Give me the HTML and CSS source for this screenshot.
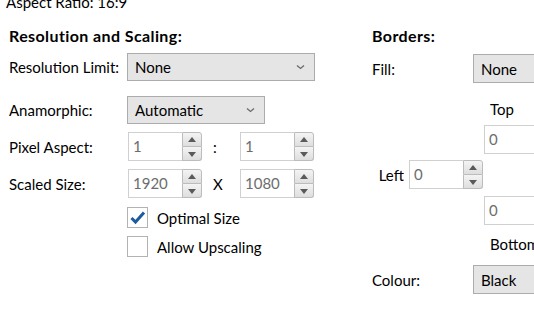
FILE: index.html
```html
<!DOCTYPE html>
<html>
<head>
  <meta charset="UTF-8">
  <link rel="stylesheet" href="styles.css">
</head>
<body>
  <div class="ar-caption">Aspect Ratio: 16:9</div>

  <div class="ar-panels">
    <!-- Resolution and Scaling -->
    <section class="ar-panel ar-scaling">
      <h3>Resolution and Scaling:</h3>

      <div class="ar-row ar-row-first">
        <label class="ar-label">Resolution Limit:</label>
        <div class="ar-dropdown ar-dropdown-wide">
          <span>None</span>
          <svg class="ar-chevron" width="9" height="6" viewBox="0 0 9 6"><path d="M1 1.5 L4.5 4.5 L8 1.5" fill="none" stroke="#6b6b6b" stroke-width="1.3"/></svg>
        </div>
      </div>

      <div class="ar-row ar-row-anam">
        <label class="ar-label">Anamorphic:</label>
        <div class="ar-dropdown ar-dropdown-mid">
          <span>Automatic</span>
          <svg class="ar-chevron" width="9" height="6" viewBox="0 0 9 6"><path d="M1 1.5 L4.5 4.5 L8 1.5" fill="none" stroke="#6b6b6b" stroke-width="1.3"/></svg>
        </div>
      </div>

      <div class="ar-row ar-row-spin">
        <label class="ar-label">Pixel Aspect:</label>
        <div class="ar-spinner">
          <div class="ar-spin-value">1</div>
          <div class="ar-spin-buttons"><span class="ar-up"></span><span class="ar-down"></span></div>
        </div>
        <span class="ar-sep">:</span>
        <div class="ar-spinner">
          <div class="ar-spin-value">1</div>
          <div class="ar-spin-buttons"><span class="ar-up"></span><span class="ar-down"></span></div>
        </div>
      </div>

      <div class="ar-row ar-row-spin">
        <label class="ar-label">Scaled Size:</label>
        <div class="ar-spinner">
          <div class="ar-spin-value">1920</div>
          <div class="ar-spin-buttons"><span class="ar-up"></span><span class="ar-down"></span></div>
        </div>
        <span class="ar-sep">X</span>
        <div class="ar-spinner">
          <div class="ar-spin-value">1080</div>
          <div class="ar-spin-buttons"><span class="ar-up"></span><span class="ar-down"></span></div>
        </div>
      </div>

      <div class="ar-check ar-check-first">
        <span class="ar-box">
          <svg width="21" height="21" viewBox="0 0 21 21"><path d="M4.5 11 L8.5 15 L17 5.5" fill="none" stroke="#1d5c9c" stroke-width="3"/></svg>
        </span>
        <span>Optimal Size</span>
      </div>
      <div class="ar-check">
        <span class="ar-box"></span>
        <span>Allow Upscaling</span>
      </div>
    </section>

    <!-- Borders -->
    <section class="ar-panel ar-borders">
      <h3>Borders:</h3>

      <div class="ar-row ar-row-fill">
        <label class="ar-label ar-label-short">Fill:</label>
        <div class="ar-dropdown ar-dropdown-wide">
          <span>None</span>
        </div>
      </div>

      <div class="ar-border-grid">
        <span class="ar-edge ar-edge-top">Top</span>
        <div class="ar-spinner ar-cell-top">
          <div class="ar-spin-value">0</div>
          <div class="ar-spin-buttons"><span class="ar-up"></span><span class="ar-down"></span></div>
        </div>
        <span class="ar-edge-left">Left</span>
        <div class="ar-spinner ar-cell-left">
          <div class="ar-spin-value">0</div>
          <div class="ar-spin-buttons"><span class="ar-up"></span><span class="ar-down"></span></div>
        </div>
        <div class="ar-spinner ar-cell-bottom">
          <div class="ar-spin-value">0</div>
          <div class="ar-spin-buttons"><span class="ar-up"></span><span class="ar-down"></span></div>
        </div>
        <span class="ar-edge ar-edge-bottom">Bottom</span>
      </div>

      <div class="ar-row ar-row-colour">
        <label class="ar-label ar-label-short">Colour:</label>
        <div class="ar-dropdown ar-dropdown-wide">
          <span>Black</span>
        </div>
      </div>
    </section>
  </div>
</body>
</html>
```

FILE: styles.css
```css
html, body {
  margin: 0;
  padding: 0;
}
body {
  width: 534px;
  height: 325px;
  overflow: hidden;
  background-color: #ffffff;
  color: #000000;
  font-family: Lato, "Liberation Sans", sans-serif;
  font-size: 15px;
  line-height: 20px;
}
.ar-caption {
  margin-top: -8px;
  padding-left: 6px;
}
.ar-panels {
  display: flex;
  width: 800px;
}
.ar-panel h3 {
  margin: 14px 0 0 0;
  font-size: 16px;
  letter-spacing: 0.4px;
  line-height: 20px;
  font-weight: bold;
}
.ar-scaling {
  width: 362px;
  padding-left: 9px;
}
.ar-borders {
  padding-left: 1px;
}
/* Строки формы */
.ar-row {
  display: flex;
  align-items: center;
}
.ar-row-first {
  margin-top: 7px;
}
.ar-row-anam {
  margin-top: 15px;
}
.ar-row-spin {
  margin-top: 8px;
}
.ar-label {
  width: 118px;
  flex-shrink: 0;
}
.ar-label-short {
  width: 101px;
}
/* Выпадающие списки */
.ar-dropdown {
  display: flex;
  align-items: center;
  justify-content: space-between;
  box-sizing: border-box;
  height: 28px;
  padding: 0 8px 0 7px;
  background-color: #e5e5e5;
  border: 1px solid #acacac;
}
.ar-dropdown-wide {
  width: 188px;
}
.ar-dropdown-mid {
  width: 138px;
}
.ar-chevron {
  margin-right: 1px;
}
/* Счётчики */
.ar-spinner {
  display: flex;
  margin-left: 1px;
}
.ar-spin-value {
  box-sizing: border-box;
  width: 54px;
  height: 29px;
  padding: 0 4px;
  border: 1px solid #d0d0d0;
  border-right: none;
  color: #6d6d6d;
  line-height: 27px;
}
.ar-spin-buttons {
  display: flex;
  flex-direction: column;
  width: 20px;
  height: 29px;
}
.ar-spin-buttons span {
  flex: 1;
  box-sizing: border-box;
  border: 1px solid #bcbcbc;
  background: linear-gradient(#f4f4f4, #dedede);
  position: relative;
}
.ar-up {
  border-radius: 0 3px 0 0;
}
.ar-down {
  border-top: none !important;
  border-radius: 0 0 3px 0;
}
.ar-up::after, .ar-down::after {
  content: "";
  position: absolute;
  left: 5px;
  width: 0;
  height: 0;
  border-left: 4px solid transparent;
  border-right: 4px solid transparent;
}
.ar-up::after {
  top: 4px;
  border-bottom: 5px solid #5a5a5a;
}
.ar-down::after {
  top: 5px;
  border-top: 5px solid #5a5a5a;
}
.ar-sep {
  width: 37px;
  padding-left: 11px;
  box-sizing: border-box;
}
/* Флажки */
.ar-check {
  display: flex;
  align-items: center;
  margin-top: 8px;
  margin-left: 118px;
}
.ar-check-first {
  margin-top: 9px;
}
.ar-box {
  box-sizing: border-box;
  width: 21px;
  height: 21px;
  margin-right: 9px;
  border: 1px solid #b3b3b3;
  background-color: #ffffff;
  display: flex;
}
.ar-box svg {
  margin: -1px;
}
/* Поля рамки */
.ar-row-fill {
  margin-top: 8px;
}
.ar-border-grid {
  display: grid;
  grid-template-columns: 37px 75px 80px;
  margin-top: 16px;
}
.ar-edge {
  grid-column: 3;
  padding-left: 6px;
}
.ar-edge-top {
  grid-row: 1;
}
.ar-cell-top {
  grid-column: 3;
  grid-row: 2;
  margin: 6px 0 0 0;
}
.ar-edge-left {
  grid-column: 1;
  grid-row: 3;
  text-align: right;
  padding-right: 5px;
  align-self: center;
  margin-top: 6px;
}
.ar-cell-left {
  grid-column: 2;
  grid-row: 3;
  margin: 6px 0 0 0;
}
.ar-cell-bottom {
  grid-column: 3;
  grid-row: 4;
  margin: 7px 0 0 0;
}
.ar-edge-bottom {
  grid-row: 5;
  margin-top: 9px;
}
.ar-row-colour {
  margin-top: 11px;
}
.ar-row-colour .ar-dropdown, .ar-row-fill .ar-dropdown {
  height: 29px;
}
```
